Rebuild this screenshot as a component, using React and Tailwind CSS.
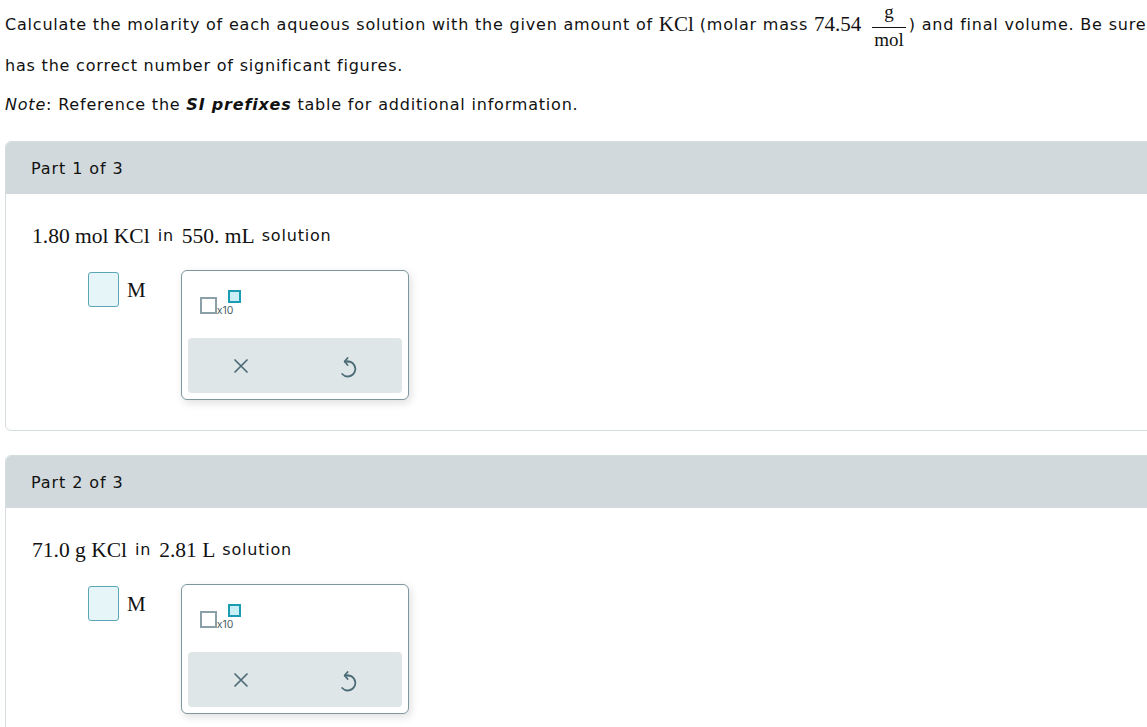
import React from "react";

const sans = { fontFamily: '"DejaVu Sans", Verdana, sans-serif' };
const serif = { fontFamily: '"Liberation Serif", "Times New Roman", serif', letterSpacing: 0 };

function UndoIcon() {
  return (
    <svg width="20" height="24" viewBox="0 0 20 24" fill="none" stroke="#4b6b76" strokeWidth="1.8" strokeLinecap="round" strokeLinejoin="round">
      <path d="M10 6.5 A7.5 7.5 0 1 1 4.2 19" />
      <path d="M10 6.5 H7" />
      <path d="M9.6 3 L6.6 6.5 L9.6 10" />
    </svg>
  );
}

function XIcon() {
  return (
    <svg width="16" height="16" viewBox="0 0 16 16" fill="none" stroke="#4b6b76" strokeWidth="1.7" strokeLinecap="round">
      <path d="M2 2 L14 14 M14 2 L2 14" />
    </svg>
  );
}

function Part({ n, children }) {
  return (
    <div className="ml-[5px] w-[1200px] rounded-[6px] border border-[#d6dddf] overflow-hidden bg-white">
      <div className="h-[52px] bg-[#d1d9dc] flex items-center pl-[25px] pt-[1px] text-[16px] tracking-[0.9px] text-[#111]" style={sans}>
        Part {n} of 3
      </div>
      <div className="pl-[26px] pt-[28px] pb-[30px]">
        <div className="h-[28px] flex items-center text-[16px] tracking-[0.8px] text-[#111] whitespace-nowrap" style={sans}>
          {children}
        </div>
        <div className="flex mt-[21px]">
          <div className="flex items-start pl-[56px] pt-[1px]">
            <div className="w-[31px] h-[35px] rounded-[3px] border-[1.5px] border-[#5aa6b7] bg-[#e6f5f8]" />
            <span className="ml-[8px] text-[21px] leading-[36px] text-[#111]" style={serif}>M</span>
          </div>
          <div className="ml-[35px] -mt-[1px] w-[228px] h-[130px] rounded-[6px] border border-[#7d979f] bg-white shadow-[2px_3px_8px_rgba(0,0,0,0.13)] p-[6px] flex flex-col">
            <div className="h-[61px] flex items-start pl-[12px] pt-[13px]">
              <div className="w-[17px] h-[17px] border-2 border-[#8a9fa6] mt-[7px]" />
              <span className="text-[10.5px] leading-[10px] text-[#4a5f66] mt-[16px]" style={{ fontFamily: 'Inter, "DejaVu Sans", sans-serif' }}>x10</span>
              <div className="w-[13px] h-[13px] border-2 border-[#1a9db3] bg-[#c9eef5] -ml-[5px]" />
            </div>
            <div className="flex-1 rounded-[4px] bg-[#dfe6e8] flex items-center">
              <div className="w-[108px] flex justify-center"><XIcon /></div>
              <div className="w-[108px] flex justify-center pt-[2px]"><UndoIcon /></div>
            </div>
          </div>
        </div>
      </div>
    </div>
  );
}

export default function App() {
  return (
    <div className="w-[1147px] h-[727px] overflow-hidden bg-white text-[#111]" style={sans}>
      <div className="pl-[5px] whitespace-nowrap tracking-[0.8px]">
        <div className="h-[50px] flex items-center text-[16px]">
          <span>Calculate the molarity of each aqueous solution with the given amount of&nbsp;</span>
          <span className="text-[21px]" style={serif}>KCl</span>
          <span>&nbsp;(molar mass&nbsp;</span>
          <span className="text-[21px]" style={serif}>74.54</span>
          <span className="inline-flex flex-col items-center ml-[11px] mr-[3px] mt-[1px] text-[19px] leading-[22px]" style={serif}>
            <span className="px-[7px] pb-[4px]">g</span>
            <span className="w-full border-t border-[#111]" />
            <span className="px-[2px] pt-[1px]">mol</span>
          </span>
          <span>) and final volume. Be sure</span>
        </div>
        <div className="h-[32px] flex items-center text-[16px]">has the correct number of significant figures.</div>
        <div className="h-[32px] mt-[7px] flex items-center text-[16px]">
          <i>Note</i>: Reference the&nbsp;<b><i>SI prefixes</i></b>&nbsp;table for additional information.
        </div>
      </div>
      <div className="mt-[20px]">
        <Part n={1}>
          <span className="text-[21.5px]" style={serif}>1.80 mol KCl</span>
          <span className="ml-[8px]">in</span>
          <span className="text-[21.5px] ml-[8px]" style={serif}>550. mL</span>
          <span className="ml-[7px]">solution</span>
        </Part>
      </div>
      <div className="mt-[24px]">
        <Part n={2}>
          <span className="text-[21.5px]" style={serif}>71.0 g KCl</span>
          <span className="ml-[8px]">in</span>
          <span className="text-[21.5px] ml-[8px]" style={serif}>2.81 L</span>
          <span className="ml-[7px]">solution</span>
        </Part>
      </div>
    </div>
  );
}
